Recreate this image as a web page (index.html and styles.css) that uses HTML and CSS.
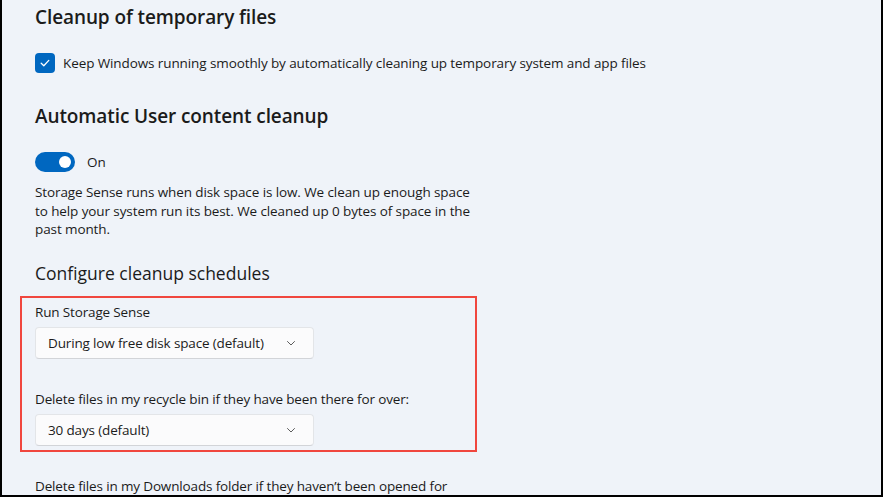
FILE: index.html
```html
<!DOCTYPE html>
<html lang="en">
  <head>
    <meta charset="UTF-8" />
    <meta name="viewport" content="width=device-width, initial-scale=1.0" />
    <title>Storage Sense</title>
    <link rel="stylesheet" href="styles.css">
  </head>
  <body>
    <div class="page">
      <h2 class="title">Cleanup of temporary files</h2>
      <label class="check-row">
        <span class="checkbox">
          <svg width="12" height="12" viewBox="0 0 12 12"><path d="M2.2 6.3 L4.8 8.8 L9.8 3.4" fill="none" stroke="#fff" stroke-width="1.3" stroke-linecap="round" stroke-linejoin="round"/></svg>
        </span>
        <span>Keep Windows running smoothly by automatically cleaning up temporary system and app files</span>
      </label>

      <h2 class="title second">Automatic User content cleanup</h2>
      <div class="toggle-row">
        <span class="toggle"><span class="knob"></span></span>
        <span>On</span>
      </div>
      <p class="desc">Storage Sense runs when disk space is low. We clean up enough space to help your system run its best. We cleaned up 0 bytes of space in the past month.</p>

      <h3 class="subtitle">Configure cleanup schedules</h3>

      <div class="highlight">
        <div class="field-label">Run Storage Sense</div>
        <div class="select">
          <span>During low free disk space (default)</span>
          <svg class="chevron" width="12" height="12" viewBox="0 0 12 12"><path d="M2.5 4.5 L6 8 L9.5 4.5" fill="none" stroke="#5c5c5c" stroke-width="1" stroke-linecap="round" stroke-linejoin="round"/></svg>
        </div>
        <div class="field-label lower">Delete files in my recycle bin if they have been there for over:</div>
        <div class="select">
          <span>30 days (default)</span>
          <svg class="chevron" width="12" height="12" viewBox="0 0 12 12"><path d="M2.5 4.5 L6 8 L9.5 4.5" fill="none" stroke="#5c5c5c" stroke-width="1" stroke-linecap="round" stroke-linejoin="round"/></svg>
        </div>
      </div>

      <div class="field-label last">Delete files in my Downloads folder if they haven’t been opened for</div>
    </div>
  </body>
</html>
```
FILE: styles.css
```css
* {
  margin: 0;
  padding: 0;
  box-sizing: border-box;
}

html {
  font-size: 14px;
}

body {
  width: 883px;
  height: 497px;
  overflow: hidden;
  background-color: #eff3f9;
  border-left: 2px solid #000;
  border-right: 2px solid #000;
  border-bottom: 2px solid #000;
  font-family: 'Open Sans', 'Noto Sans', sans-serif;
  color: #1b1b1b;
}

.page {
  padding-left: 33px;
  padding-top: 3px;
}

.title {
  font-size: 19px;
  font-weight: 600;
  line-height: 28px;
  letter-spacing: -0.1px;
}

.title.second {
  margin-top: 29px;
}

.check-row {
  display: flex;
  align-items: center;
  gap: 8px;
  margin-top: 22px;
  font-size: 13.5px;
  letter-spacing: -0.1px;
}

.checkbox {
  width: 20px;
  height: 20px;
  border-radius: 4px;
  background-color: #0067c0;
  display: flex;
  align-items: center;
  justify-content: center;
}

.toggle-row {
  display: flex;
  align-items: center;
  gap: 12px;
  margin-top: 22px;
  font-size: 13.5px;
}

.toggle {
  width: 40px;
  height: 20px;
  border-radius: 10px;
  background-color: #0067c0;
  position: relative;
}

.knob {
  position: absolute;
  top: 4px;
  right: 4px;
  width: 12px;
  height: 12px;
  border-radius: 50%;
  background-color: #fff;
}

.desc {
  width: 440px;
  margin-top: 11px;
  font-size: 13.5px;
  line-height: 18.5px;
  letter-spacing: -0.1px;
}

.subtitle {
  font-size: 17.5px;
  font-weight: 400;
  line-height: 24px;
  margin-top: 22px;
}

.highlight {
  width: 457px;
  margin-left: -15px;
  margin-top: 11px;
  padding: 4px 0 4px 13px;
  border: 2px solid #f0463e;
}

.field-label {
  font-size: 13.5px;
  line-height: 20px;
  letter-spacing: -0.15px;
}

.field-label.lower {
  margin-top: 30px;
}

.field-label.last {
  margin-top: 24px;
}

.select {
  width: 279px;
  height: 32px;
  margin-top: 5px;
  padding: 0 16px 0 12px;
  display: flex;
  align-items: center;
  justify-content: space-between;
  background-color: #fbfbfc;
  border: 1px solid #e3e5e8;
  border-bottom-color: #d2d4d8;
  border-radius: 4px;
  font-size: 13.5px;
  letter-spacing: -0.15px;
}

.chevron {
  margin-top: 1px;
}
```
